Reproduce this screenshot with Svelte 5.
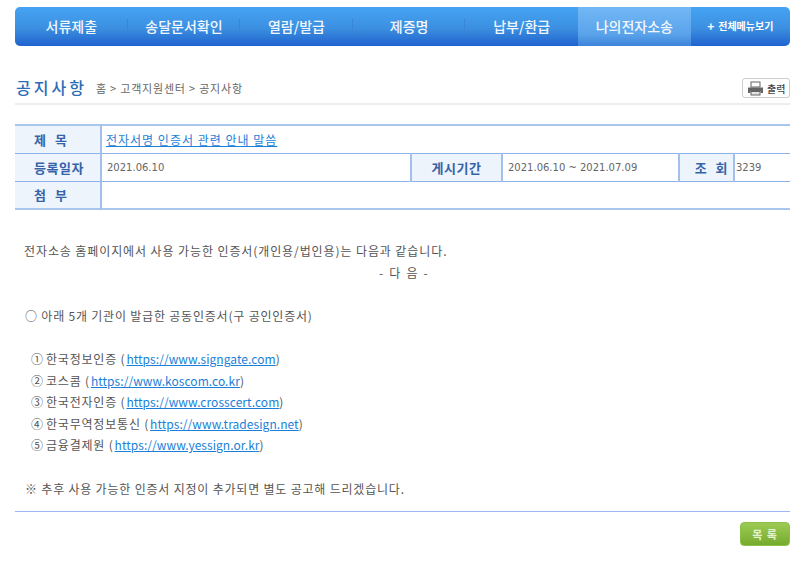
<script lang="ts">
  const menus = ['서류제출', '송달문서확인', '열람/발급', '제증명', '납부/환급', '나의전자소송'];
  const sites = [
    { mark: '①', name: '한국정보인증', url: 'https://www.signgate.com' },
    { mark: '②', name: '코스콤', url: 'https://www.koscom.co.kr' },
    { mark: '③', name: '한국전자인증', url: 'https://www.crosscert.com' },
    { mark: '④', name: '한국무역정보통신', url: 'https://www.tradesign.net' },
    { mark: '⑤', name: '금융결제원', url: 'https://www.yessign.or.kr' }
  ];
</script>

<div class="page">
  <nav class="gnb">
    {#each menus as menu, i}
      <a class="gnb-item" class:active={i === 5} href="#top">{menu}</a>
    {/each}
    <a class="gnb-all" href="#top"><span class="plus">+</span>전체메뉴보기</a>
  </nav>

  <header class="head">
    <h1>공지사항</h1>
    <div class="crumb">홈 &gt; 고객지원센터 &gt; 공지사항</div>
    <button class="print" type="button">
      <svg width="17" height="15" viewBox="0 0 17 15" aria-hidden="true">
        <rect x="4" y="1" width="9" height="5" fill="#fff" stroke="#666" />
        <path d="M1 6.500h15v5.500h-2.500v-2h-10v2h-2.500z" fill="#666" />
        <rect x="4" y="10.500" width="9" height="3.500" fill="#e4e4e4" stroke="#666" />
      </svg>
      출력
    </button>
  </header>

  <table class="view">
    <colgroup>
      <col class="c1" /><col class="c2" /><col class="c3" /><col class="c4" /><col class="c5" /><col class="c6" />
    </colgroup>
    <tbody>
      <tr>
        <th>제 목</th>
        <td colspan="5" class="subject-cell"><a class="subject" href="#top">전자서명 인증서 관련 안내 말씀</a></td>
      </tr>
      <tr>
        <th>등록일자</th>
        <td>2021.06.10</td>
        <th class="inner">게시기간</th>
        <td>2021.06.10 ~ 2021.07.09</td>
        <th class="inner count">조 회</th>
        <td class="hits">3239</td>
      </tr>
      <tr>
        <th>첨 부</th>
        <td colspan="5"></td>
      </tr>
    </tbody>
  </table>

  <div class="body">
    <p class="first">전자소송 홈페이지에서 사용 가능한 인증서(개인용/법인용)는 다음과 같습니다.</p>
    <p class="center">- 다 음 -</p>
    <p class="blank"></p>
    <p class="circle">○ 아래 5개 기관이 발급한 공동인증서(구 공인인증서)</p>
    <p class="blank"></p>
    {#each sites as site}
      <p class="site"><span class="mark">{site.mark}</span>{site.name} (<a href="#top">{site.url}</a>)</p>
    {/each}
    <p class="blank"></p>
    <p class="circle">※ 추후 사용 가능한 인증서 지정이 추가되면 별도 공고해 드리겠습니다.</p>
  </div>

  <div class="foot">
    <button class="list" type="button">목 록</button>
  </div>
</div>

<style>
  :global(body) {
    margin: 0;
    background: #fff;
  }

  .page {
    box-sizing: border-box;
    width: 800px;
    height: 571px;
    padding: 7px 10px 0 15px;
    font-family: "DejaVu Sans", "Noto Sans CJK KR", sans-serif;
    font-size: 12px;
    color: #555;
    overflow: hidden;
  }

  .gnb {
    display: flex;
    height: 39px;
    border-radius: 5px;
    background: linear-gradient(#45a3f3, #3c8fe0 55%, #1f63cf);
    overflow: hidden;
  }

  .gnb-item {
    display: flex;
    align-items: center;
    justify-content: center;
    width: 112.6px;
    padding-bottom: 2px;
    box-sizing: border-box;
    font-family: "Noto Sans CJK KR", sans-serif;
    font-size: 14px;
    font-weight: 500;
    color: #f2f7fd;
    text-decoration: none;
    background: linear-gradient(#3a86d6, #3a86d6) right center / 1px 16px no-repeat;
  }

  .gnb-item.active {
    background: linear-gradient(#72b8f6, #5aa3ea 70%, #3d83da);
  }

  .gnb-item:nth-child(5) {
    background: none;
  }

  .gnb-all {
    flex: 1;
    display: flex;
    align-items: center;
    justify-content: center;
    gap: 4px;
    padding-bottom: 2px;
    font-family: "Noto Sans CJK KR", sans-serif;
    font-size: 10px;
    font-weight: 700;
    color: #fff;
    text-decoration: none;
  }

  .plus {
    font-size: 12px;
  }

  .head {
    display: flex;
    align-items: center;
    height: 27px;
    margin-top: 27px;
    border-bottom: 2px solid #eee;
    padding-bottom: 3px;
  }

  h1 {
    margin: 0 0 0 1px;
    font-family: "Noto Sans CJK KR", sans-serif;
    font-size: 16px;
    font-weight: 500;
    letter-spacing: 3px;
    color: #2b6cb5;
  }

  .crumb {
    margin-left: 9px;
    padding-top: 3px;
    font-family: "Noto Sans CJK KR", sans-serif;
    font-size: 11px;
    letter-spacing: 0.8px;
    color: #666;
  }

  .print {
    display: flex;
    align-items: center;
    gap: 3px;
    margin-left: auto;
    margin-top: 3px;
    height: 20px;
    width: 48px;
    padding: 0 0 0 4px;
    border: 1px solid #ccc;
    border-radius: 3px;
    background: #fff;
    font-family: "Noto Sans CJK KR", sans-serif;
    font-size: 10px;
    font-weight: 500;
    color: #444;
  }

  .view {
    width: 775px;
    margin-top: 19px;
    border-collapse: collapse;
    table-layout: fixed;
    border-top: 2px solid #a9c6ec;
    border-bottom: 2px solid #a9c6ec;
  }

  .c1 { width: 86px; }
  .c2 { width: 310px; }
  .c3 { width: 91px; }
  .c4 { width: 177px; }
  .c5 { width: 55px; }
  .c6 { width: 56px; }

  tr {
    height: 28px;
  }

  th, td {
    box-sizing: border-box;
    padding: 0;
    border-bottom: 1px solid #8eb3e8;
  }

  tr:last-child th, tr:last-child td {
    border-bottom: 0;
  }

  th {
    padding-left: 19px;
    background: #eef4fc;
    border-right: 2px solid #a3c0ec;
    font-family: "Noto Sans CJK KR", sans-serif;
    font-size: 13px;
    font-weight: 700;
    letter-spacing: 0.5px;
    word-spacing: 5px;
    text-align: left;
    color: #3563a9;
  }

  th.inner {
    padding-left: 0;
    border-left: 2px solid #a3c0ec;
    text-align: center;
  }

  th.count {
    text-align: right;
    padding-right: 5px;
  }

  td {
    padding-left: 5px;
    font-size: 10px;
    color: #666;
  }

  .subject-cell {
    padding-left: 4px;
  }

  .hits {
    padding-left: 1px;
  }

  .subject {
    font-family: "Noto Sans CJK KR", sans-serif;
    font-size: 12px;
    letter-spacing: 1px;
    color: #1a7fd8;
  }

  .body {
    height: 271px;
    padding-top: 30px;
    border-bottom: 1px solid #9db8ee;
  }

  .body p {
    margin: 0;
    height: 21.600px;
    line-height: 21.600px;
    font-family: "Noto Sans CJK KR", sans-serif;
    font-size: 12px;
    letter-spacing: 0.8px;
    color: #555;
    white-space: nowrap;
  }

  .body .first {
    padding-left: 9px;
    letter-spacing: 0.9px;
  }

  .body .center {
    padding-left: 364px;
    letter-spacing: 1.7px;
  }

  .circle {
    padding-left: 10px;
  }

  .site {
    padding-left: 16px;
  }

  .mark {
    display: inline-block;
    width: 15px;
  }

  .site a {
    margin-left: 1px;
    letter-spacing: 0.05px;
    color: #1a7fd8;
  }

  .foot {
    display: flex;
    justify-content: flex-end;
    padding-top: 10px;
  }

  .list {
    width: 50px;
    height: 24px;
    padding: 0;
    border: 1px solid #8cc04a;
    border-radius: 4px;
    background: linear-gradient(#9ccb55, #76ab2d);
    font-family: "Noto Sans CJK KR", sans-serif;
    font-size: 11px;
    font-weight: 700;
    letter-spacing: 1px;
    color: #e4f2cf;
  }
</style>
